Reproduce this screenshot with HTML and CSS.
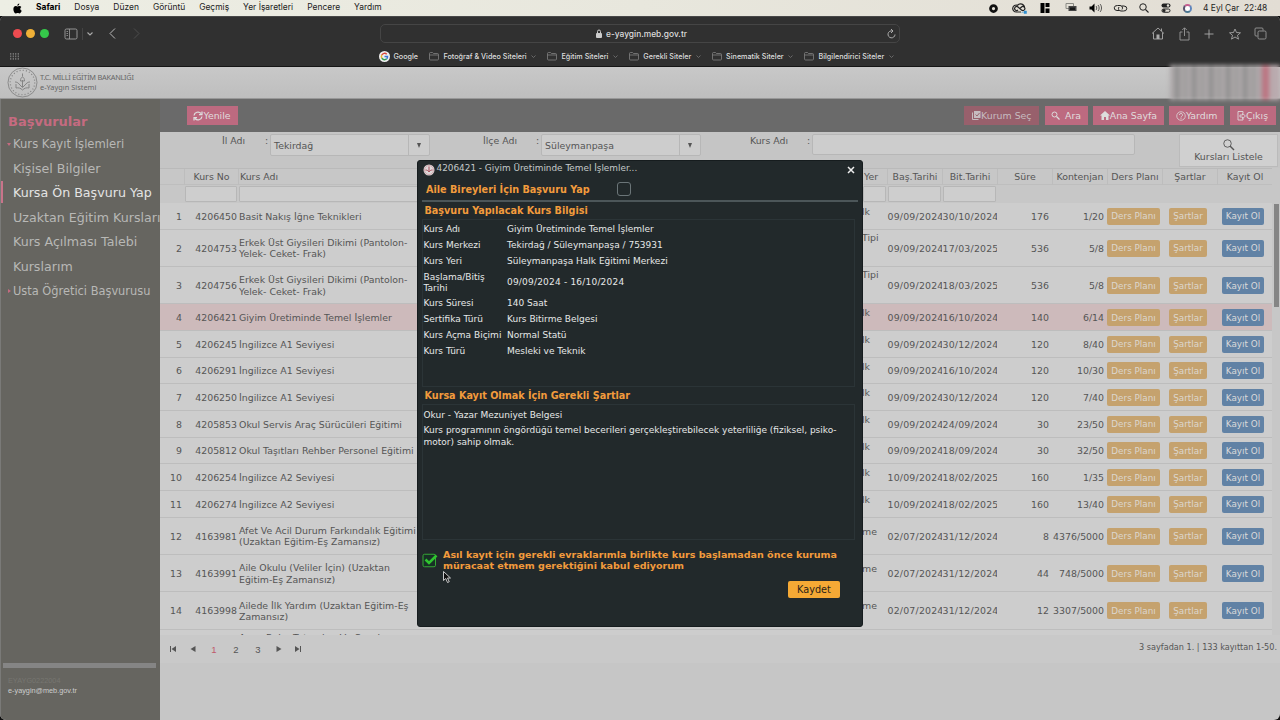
FILE: index.html
```html
<!DOCTYPE html>
<html lang="tr">
<head>
  <meta charset="UTF-8">
  <meta name="viewport" content="width=device-width, initial-scale=1.0">
  <title>e-Yaygın Sistemi</title>
  <link rel="stylesheet" href="styles.css">
</head>
<body>

<div class="menubar">
  <svg class="apple" viewBox="0 0 20 24"><path d="M14 1c0 3-2 5-4.500 5C9.300 3.500 11.500 1.300 14 1zM10 7.500c1 0 2.300-1.200 4.300-1.200 1.800 0 3.300 1 4.200 2.300-3.600 2.200-3 7 .8 8.400-.9 2.700-3 6-5 6-1.500 0-2-.9-3.900-.9s-2.500.9-3.900.9C3.800 23 .8 18 .8 13.500.8 9 3.500 6.500 6.200 6.500c1.700 0 2.800 1 3.800 1z"/></svg>
  <nav class="menus">
    <b>Safari</b><span>Dosya</span><span>Düzen</span><span>Görüntü</span><span>Geçmiş</span><span>Yer İşaretleri</span><span>Pencere</span><span>Yardım</span>
  </nav>
  <div class="status">
    <svg width="9" height="9" viewBox="0 0 18 18"><circle cx="9" cy="9" r="6" fill="none" stroke="#111" stroke-width="5.500"/></svg>
    <svg width="15" height="11" viewBox="0 0 30 22"><path d="M9 18a7 7 0 1 1 2-13.500A8 8 0 0 1 25 10M18 18H9M12 14a4 4 0 1 1 0-6l7 6a4 4 0 1 0 0-6l-3 3" fill="none" stroke="#222" stroke-width="2.400"/><path d="M19 19h4m1-3h5v5h-5z" fill="#2f8fd0" stroke="#2f8fd0"/></svg>
    <svg width="10" height="10" viewBox="0 0 20 20"><path d="M1 0h8v20H1zM11 0h8v8h-8zM11 11h8v9h-8z"/></svg>
    <svg width="12" height="10" viewBox="0 0 24 20"><path d="M2 1h15v10H2z" fill="none" stroke="#8a8a84" stroke-width="2"/><path d="M7 6h16v10H7z" fill="#444"/><path d="M10 9h10v5H10z" fill="#171717"/></svg>
    <svg width="13" height="10" viewBox="0 0 26 20"><path d="M1 7h4l6-6v18l-6-6H1z"/><path d="M14 6c2 2 2 6 0 8M18 4c3 3 3 9 0 12M22 2c4 4 4 12 0 16" fill="none" stroke="#333" stroke-width="1.600"/></svg>
    <svg width="15" height="10" viewBox="0 0 30 20"><path d="M13 15H8a6 5 0 1 1 1-10h5a5 5 0 0 1 4 8M17 6h5a6 5 0 1 1-1 10h-5a5 5 0 0 1-4-8" fill="none" stroke="#222" stroke-width="2"/></svg>
    <svg width="10" height="10" viewBox="0 0 20 20"><circle cx="8" cy="8" r="6.500" fill="none" stroke="#222" stroke-width="2"/><path d="M13 13l6 6" stroke="#222" stroke-width="2.200"/></svg>
    <svg width="10" height="10" viewBox="0 0 20 20"><rect x="1" y="1" width="18" height="8" rx="4" fill="#222"/><circle cx="14" cy="5" r="2.500" fill="#e4e1d8"/><rect x="2" y="12" width="16" height="6.500" rx="3.200" fill="none" stroke="#222" stroke-width="2"/><circle cx="6" cy="15.200" r="3" fill="#222"/></svg>
    <span class="siri"></span>
    <span class="clock">4 Eyl Çar&nbsp; 22:48</span>
  </div>
</div>

<div class="window">
  <div class="safari">
    <div class="safari-top">
      <div class="safari-left">
        <i class="light red"></i><i class="light yellow"></i><i class="light green"></i>
        <svg class="side-icon" width="14" height="12" viewBox="0 0 28 24"><rect x="2" y="2" width="24" height="20" rx="3" fill="none" stroke="#a0a0a0" stroke-width="1.800"/><path d="M11 2v20M5 7h3M5 11h3M5 15h3" stroke="#a0a0a0" stroke-width="1.600"/></svg>
        <i class="divider"></i>
        <svg class="down" width="6" height="4" viewBox="0 0 12 8"><path d="M1 1l5 5 5-5" fill="none" stroke="#aaa" stroke-width="2.200"/></svg>
        <svg class="back" width="7" height="11" viewBox="0 0 14 22"><path d="M12 1L2 11l10 10" fill="none" stroke="#b9b9b9" stroke-width="2"/></svg>
        <svg class="forward" width="7" height="11" viewBox="0 0 14 22"><path d="M2 1l10 10L2 21" fill="none" stroke="#4d4d4d" stroke-width="2"/></svg>
      </div>
      <div class="address">
        <svg width="6" height="9" viewBox="0 0 12 18"><rect y="8" width="12" height="10" rx="2" fill="#ccc"/><path d="M3 9V5a3 3 0 0 1 6 0v4" fill="none" stroke="#ccc" stroke-width="2"/></svg>
        <span>e-yaygin.meb.gov.tr</span>
        <svg class="reload" width="9" height="10" viewBox="0 0 18 20"><path d="M11 4a7 7 0 1 0 5 7M8 0l4 4-4 4" fill="none" stroke="#bbb" stroke-width="1.800"/></svg>
      </div>
      <div class="safari-right">
        <svg width="14" height="13" viewBox="0 0 28 26"><path d="M2 13L14 2l12 11M5 11v13h18V11M21 8V3" fill="none" stroke="#aaa" stroke-width="1.800"/><path d="M11 15h6v9h-6z" fill="#aaa"/></svg>
        <svg width="11" height="14" viewBox="0 0 22 28"><path d="M7 10H2v16h18V10h-5M11 18V2M6.500 6L11 1.500 15.500 6" fill="none" stroke="#999" stroke-width="1.800"/></svg>
        <svg width="10" height="10" viewBox="0 0 20 20"><path d="M10 1v18M1 10h18" stroke="#aaa" stroke-width="1.800"/></svg>
        <svg width="12" height="12" viewBox="0 0 24 24"><path d="M12 2l3 7 8 .6-6 5 2 7.700-7-4.300-7 4.300 2-7.700-6-5L9 9z" fill="none" stroke="#aaa" stroke-width="1.700"/></svg>
        <svg width="13" height="13" viewBox="0 0 26 26"><path d="M7 18H4a2 2 0 0 1-2-2V4a2 2 0 0 1 2-2h12a2 2 0 0 1 2 2v3" fill="none" stroke="#999" stroke-width="1.800"/><rect x="8" y="8" width="16" height="16" rx="2.500" fill="none" stroke="#999" stroke-width="1.800"/></svg>
      </div>
    </div>
    <div class="bookmarks">
      <svg class="apps" width="9" height="7" viewBox="0 0 18 14"><path d="M1.500 0v14M6.500 0v14M11.500 0v14M16.500 0v14" stroke="#888" stroke-width="2" stroke-dasharray="3.500 1.500"/></svg>
      <div class="bookmark-list" id="bookmarks">
        <span class="bookmark google"><svg width="11" height="11" viewBox="0 0 22 22"><circle cx="11" cy="11" r="11" fill="#eee"/><g fill="none" stroke-width="3"><path d="M5.500 8A6.300 6.300 0 0 1 15.500 6.500" stroke="#d9473b"/><path d="M5.600 14.200a6.300 6.300 0 0 1-.1-6.200" stroke="#e5b32c"/><path d="M15.500 15.500a6.300 6.300 0 0 1-9.900-1.300" stroke="#35a053"/><path d="M11 11h6a6.300 6.300 0 0 1-1.500 4.500" stroke="#3b76d8"/></g></svg>Google</span>
      </div>
    </div>
  </div>

  <header class="site-header">
    <svg class="seal" width="31" height="31" viewBox="0 0 62 62" fill="none" stroke="#858585"><circle cx="31" cy="31" r="29" stroke-width="1.800"/><circle cx="31" cy="31" r="24.500" stroke-width="2.500" stroke-dasharray="2 4.400"/><path d="M31 13v6M27 28c0-4 1-7 4-8 3 1 4 4 4 8zM31 26v14M16 30c3 0 6 1 8 4l7 7 7-7c2-3 5-4 8-4M18 34v8c5-1 9 0 13 4 4-4 8-5 13-4v-8" stroke-width="2"/></svg>
    <div class="brand"><span>T.C. MİLLİ EĞİTİM BAKANLIĞI</span><br>e-Yaygın Sistemi</div>
    <div class="user-info"></div>
  </header>

  <div class="page">
    <aside class="sidebar">
      <h2>Başvurular</h2>
      <ul>
        <li class="group open">Kurs Kayıt İşlemleri</li>
        <li>Kişisel Bilgiler</li>
        <li class="active">Kursa Ön Başvuru Yap</li>
        <li>Uzaktan Eğitim Kursları</li>
        <li>Kurs Açılması Talebi</li>
        <li>Kurslarım</li>
        <li class="group">Usta Öğretici Başvurusu</li>
      </ul>
      <div class="side-footer">
        <div class="faint">EYAYG0222004</div>
        <div>e-yaygin@meb.gov.tr</div>
      </div>
    </aside>

    <main class="content">
      <div class="actions">
        <button class="btn-pink refresh"><svg width="10" height="10" viewBox="0 0 20 20"><path d="M2 9a8 8 0 0 1 14-4M18 1v6h-6M18 11a8 8 0 0 1-14 4M2 19v-6h6" fill="none" stroke="#ddd" stroke-width="2.500"/></svg>Yenile</button>
        <button class="btn-pink kurum"><svg width="9" height="9" viewBox="0 0 18 18"><path d="M4 0h13v14H4z" fill="#c6bcc0"/><path d="M1 3v14h12" fill="none" stroke="#c6bcc0" stroke-width="2"/><path d="M7 7l3 3 5-6" fill="none" stroke="#99656f" stroke-width="2"/></svg>Kurum Seç</button>
        <button class="btn-pink ara"><svg width="9" height="9" viewBox="0 0 18 18"><circle cx="7" cy="7" r="5" fill="none" stroke="#ddd" stroke-width="2"/><path d="M11 11l6 6" stroke="#ddd" stroke-width="2.500"/></svg>Ara</button>
        <button class="btn-pink home"><svg width="10" height="9" viewBox="0 0 20 18"><path d="M10 0l10 9h-3v9h-5v-6H8v6H3V9H0z" fill="#ddd"/></svg>Ana Sayfa</button>
        <button class="btn-pink help"><svg width="10" height="10" viewBox="0 0 20 20"><circle cx="10" cy="10" r="8.500" fill="none" stroke="#ddd" stroke-width="1.500"/><path d="M7 8a3 3 0 1 1 4.500 2.500Q10 11.500 10 13M10 14.500V16" fill="none" stroke="#ddd" stroke-width="1.800"/></svg>Yardım</button>
        <button class="btn-pink exit"><svg width="9" height="10" viewBox="0 0 18 20"><path d="M12 5V1H2v17h10v-4M6 8v4h5v3l6-5-6-5v3z" fill="none" stroke="#ddd" stroke-width="1.700"/></svg>Çıkış</button>
      </div>

      <div class="filters">
        <label class="l1">İl Adı</label><span class="colon">:</span>
        <div class="select">Tekirdağ<i></i></div>
        <label class="l2">İlçe Adı</label><span class="colon">:</span>
        <div class="select">Süleymanpaşa<i></i></div>
        <label class="l3">Kurs Adı</label><span class="colon">:</span>
        <div class="search-box"></div>
        <button class="list-btn"><svg width="12" height="12" viewBox="0 0 24 24"><circle cx="9" cy="9" r="7.500" fill="none" stroke="#555" stroke-width="1.800"/><path d="M14 14l8 8" stroke="#555" stroke-width="3"/></svg>Kursları Listele</button>
      </div>

      <div class="grid">
        <div class="row head">
          <span></span><span>Kurs No</span><span class="left">Kurs Adı</span><span></span><span class="left">Yer</span><span>Baş.Tarihi</span><span>Bit.Tarihi</span><span>Süre</span><span>Kontenjan</span><span>Ders Planı</span><span>Şartlar</span><span>Kayıt Ol</span>
        </div>
        <div class="row filter-row">
          <span></span><span><i></i></span><span><i></i></span><span></span><span><i></i></span><span><i></i></span><span><i></i></span>
        </div>
        <div class="grid-body">
          <div class="rows" id="rows"></div>
          <i class="scroll"></i>
        </div>
      </div>

      <div class="pager">
        <svg width="6" height="6" viewBox="0 0 12 12"><path d="M0 0h2v12H0zM12 0v12L3 6z"/></svg>
        <svg width="6" height="6" viewBox="0 0 12 12"><path d="M11 0v12L1 6z"/></svg>
        <span class="current">1</span><span>2</span><span>3</span>
        <svg width="6" height="6" viewBox="0 0 12 12"><path d="M1 0v12l10-6z"/></svg>
        <svg width="6" height="6" viewBox="0 0 12 12"><path d="M0 0v12l9-6zM10 0h2v12h-2z"/></svg>
        <div class="info">3 sayfadan 1. | 133 kayıttan 1-50.</div>
      </div>
    </main>
  </div>
</div>

<div class="modal">
  <div class="modal-title">
    <svg width="12" height="12" viewBox="0 0 24 24"><circle cx="12" cy="12" r="11" fill="#ded8d9"/><circle cx="12" cy="12" r="9" fill="none" stroke="#c98d96" stroke-width="1.200"/><path d="M12 5v9M5 12c3 0 5 1 7 4 2-3 4-4 7-4" fill="none" stroke="#a64b58" stroke-width="2"/></svg>
    <span>4206421 - Giyim Üretiminde Temel İşlemler...</span>
    <svg class="close" width="8" height="8" viewBox="0 0 16 16"><path d="M2 2l12 12M14 2L2 14" stroke="#eee" stroke-width="3"/></svg>
  </div>
  <div class="family"><span>Aile Bireyleri İçin Başvuru Yap</span><i></i></div>
  <h3>Başvuru Yapılacak Kurs Bilgisi</h3>
  <dl class="panel course">
    <dt>Kurs Adı</dt><dd>Giyim Üretiminde Temel İşlemler</dd>
    <dt>Kurs Merkezi</dt><dd>Tekirdağ / Süleymanpaşa / 753931</dd>
    <dt>Kurs Yeri</dt><dd>Süleymanpaşa Halk Eğitimi Merkezi</dd>
    <dt>Başlama/Bitiş<br>Tarihi</dt><dd class="range">09/09/2024 - 16/10/2024</dd>
    <dt>Kurs Süresi</dt><dd>140 Saat</dd>
    <dt>Sertifika Türü</dt><dd>Kurs Bitirme Belgesi</dd>
    <dt>Kurs Açma Biçimi</dt><dd>Normal Statü</dd>
    <dt>Kurs Türü</dt><dd>Mesleki ve Teknik</dd>
  </dl>
  <h3>Kursa Kayıt Olmak İçin Gerekli Şartlar</h3>
  <div class="panel terms">
    <p>Okur - Yazar Mezuniyet Belgesi</p>
    <p>Kurs programının öngördüğü temel becerileri gerçekleştirebilecek yeterliliğe (fiziksel, psiko-<br>motor) sahip olmak.</p>
  </div>
  <div class="accept">
    <svg width="16" height="15" viewBox="0 0 32 30"><rect x="2" y="2.500" width="25" height="25" rx="3" fill="#173025" stroke="#36a836" stroke-width="2"/><path d="M7 13l7 7L29 5" fill="none" stroke="#2fc52f" stroke-width="5"/></svg>
    <span>Asıl kayıt için gerekli evraklarımla birlikte kurs başlamadan önce kuruma<br>müracaat etmem gerektiğini kabul ediyorum</span>
  </div>
  <button class="save">Kaydet</button>
</div>
<svg class="cursor" width="8" height="12" viewBox="0 0 16 24"><path d="M1 1v18l4.500-4 3.500 8 3.500-1.500-3.500-7.500h6z" fill="#111" stroke="#ddd" stroke-width="1.800"/></svg>

<script>
  const siteler = ['Fotoğraf & Video Siteleri', 'Eğitim Siteleri', 'Gerekli Siteler', 'Sinematik Siteler', 'Bilgilendirici Siteler'];
  document.getElementById('bookmarks').innerHTML += siteler.map(ad => `
    <span class="bookmark">
      <svg width="10" height="9" viewBox="0 0 20 18"><path d="M1 3a2 2 0 0 1 2-2h4l2 2h8a2 2 0 0 1 2 2v9a2 2 0 0 1-2 2H3a2 2 0 0 1-2-2zM1 6h18" fill="none" stroke="#858585" stroke-width="1.500"/></svg>
      <span>${ad.replace('&', '&amp;')}</span>
      <svg class="chev" width="5" height="3" viewBox="0 0 10 6"><path d="M1 1l4 4 4-4" fill="none" stroke="#777" stroke-width="1.600"/></svg>
    </span>`).join('');

  // no, ad, yer, başlangıç, bitiş, süre, kontenjan
  const kurslar = [
    ['4206450', 'Basit Nakış İğne Teknikleri', 'lk', '09/09/2024', '30/10/2024', 176, '1/20'],
    ['4204753', 'Erkek Üst Giysileri Dikimi (Pantolon-<br>Yelek- Ceket- Frak)', 'Tipi', '09/09/2024', '17/03/2025', 536, '5/8'],
    ['4204756', 'Erkek Üst Giysileri Dikimi (Pantolon-<br>Yelek- Ceket- Frak)', 'Tipi', '09/09/2024', '18/03/2025', 536, '5/8'],
    ['4206421', 'Giyim Üretiminde Temel İşlemler', 'lk', '09/09/2024', '16/10/2024', 140, '6/14'],
    ['4206245', 'İngilizce A1 Seviyesi', 'lk', '09/09/2024', '30/12/2024', 120, '8/40'],
    ['4206291', 'İngilizce A1 Seviyesi', 'lk', '09/09/2024', '16/10/2024', 120, '10/30'],
    ['4206250', 'İngilizce A1 Seviyesi', 'lk', '09/09/2024', '30/12/2024', 120, '7/40'],
    ['4205853', 'Okul Servis Araç Sürücüleri Eğitimi', 'lk', '09/09/2024', '24/09/2024', 30, '23/50'],
    ['4205812', 'Okul Taşıtları Rehber Personel Eğitimi', 'lk', '09/09/2024', '18/09/2024', 30, '32/50'],
    ['4206254', 'İngilizce A2 Seviyesi', 'lk', '10/09/2024', '18/02/2025', 160, '1/35'],
    ['4206274', 'İngilizce A2 Seviyesi', 'lk', '10/09/2024', '18/02/2025', 160, '13/40'],
    ['4163981', 'Afet Ve Acil Durum Farkındalık Eğitimi<br>(Uzaktan Eğitim-Eş Zamansız)', 'me', '02/07/2024', '31/12/2024', 8, '4376/5000'],
    ['4163991', 'Aile Okulu (Veliler İçin) (Uzaktan<br>Eğitim-Eş Zamansız)', 'me', '02/07/2024', '31/12/2024', 44, '748/5000'],
    ['4163998', 'Ailede İlk Yardım (Uzaktan Eğitim-Eş<br>Zamansız)', 'me', '02/07/2024', '31/12/2024', 12, '3307/5000']
  ];

  document.getElementById('rows').innerHTML = kurslar.map((k, i) => `
    <div class="row data${k[1].includes('<br>') ? ' tall' : ''}${i === 3 ? ' selected' : ''}">
      <span class="right idx">${i + 1}</span><span class="right num">${k[0]}</span><span class="left">${k[1]}</span><span></span>
      <span class="yer ${k[2] === 'Tipi' ? 'tipi' : ''}">${k[2]}</span>
      <span class="date">${k[3]}</span><span class="date">${k[4]}</span>
      <span class="right sure">${k[5]}</span><span class="right kont">${k[6]}</span>
      <span><button class="mini plan">Ders Planı</button></span>
      <span><button class="mini sart">Şartlar</button></span>
      <span><button class="mini kayit">Kayıt Ol</button></span>
    </div>`).join('') + `
    <div class="row data last"><span></span><span></span><span class="left">Anne Baba Tutumları Ve Çocuk</span><span></span></div>`;
</script>

</body>
</html>
```
FILE: styles.css
```css
* {
    box-sizing: border-box;
}
body {
    margin: 0;
    width: 1280px;
    height: 720px;
    overflow: hidden;
    background: #111;
    font-family: "DejaVu Sans", sans-serif;
    font-size: 9.4px;
    color: #555;
}
svg {
    display: block;
    flex-shrink: 0;
}
button {
    border: none;
    padding: 0;
    font-family: inherit;
}

/* macOS menü çubuğu */
.menubar {
    height: 16px;
    display: flex;
    align-items: center;
    background: linear-gradient(90deg, #edeee4, #e8e7dd 50%, #e2ddd4);
    font-family: Inter, sans-serif;
    font-size: 8.45px;
    color: #1c1c1c;
}
.apple {
    width: 9px;
    height: 11px;
    margin-left: 13px;
}
.menus {
    display: flex;
    gap: 14px;
    margin-left: 14px;
    line-height: 15px;
    padding-bottom: 1px;
}
.menus b {
    color: #000;
}
.status {
    margin-left: auto;
    width: 300px;
    display: grid;
    grid-template-columns: 26px 26px 26px 25px 25px 25px 22px 22px 20px auto;
    align-items: center;
    justify-items: center;
}
.siri {
    width: 9px;
    height: 9px;
    border-radius: 50%;
    border: 2px solid #6e6a80;
    border-color: #c55d90 #5d86bd #4a7690 #55516c;
    background: #fff;
}
.clock {
    justify-self: start;
    margin-left: 6px;
    white-space: nowrap;
}

/* Safari */
.window {
    height: 704px;
    display: flex;
    flex-direction: column;
    border-radius: 5px 5px 6px 6px;
    overflow: hidden;
    background: #c6c6c6;
}
.safari {
    height: 51px;
    background: #303030;
    border-top: 1px solid #484848;
    border-bottom: 1px solid #151515;
    font-family: Inter, sans-serif;
    color: #ddd;
}
.safari-top {
    height: 33px;
    display: flex;
    align-items: center;
}
.safari-left {
    width: 380px;
    display: flex;
    align-items: center;
    padding-left: 13px;
}
.light {
    width: 9px;
    height: 9px;
    border-radius: 50%;
    margin-right: 4.4px;
}
.red {
    background: #ed4b50;
}
.yellow {
    background: #efb037;
}
.green {
    background: #35c84a;
}
.side-icon {
    margin-left: 11px;
}
.divider {
    width: 1px;
    height: 12px;
    margin-left: 4px;
    background: #444;
}
.down {
    margin-left: 4px;
}
.back {
    margin-left: 16px;
}
.forward {
    margin-left: 17px;
}
.address {
    width: 520px;
    height: 19px;
    border: 1px solid #454545;
    border-radius: 5px;
    display: flex;
    align-items: center;
    font-size: 8.4px;
    font-weight: 500;
    padding: 0 3px 0 215px;
    gap: 4px;
}
.reload {
    margin-left: auto;
}
.safari-right {
    margin-left: 244.5px;
    display: grid;
    grid-template-columns: 27px 25px 25px 26px 26px;
    justify-items: center;
    align-items: center;
}
.bookmarks {
    height: 13px;
    display: flex;
    align-items: center;
    font-size: 7.2px;
    font-weight: 500;
    white-space: nowrap;
}
.apps {
    margin-left: 10px;
}
.bookmark-list {
    display: flex;
    margin-left: 360px;
    gap: 10.9px;
}
.bookmark {
    display: flex;
    align-items: center;
    gap: 4.5px;
}
.google {
    gap: 3.5px;
}

.site-header {
    height: 32px;
    display: flex;
    align-items: center;
    padding-left: 7px;
    background: linear-gradient(#c8c8c8, #bebebe);
    border-bottom: 1px solid #989898;
}
.brand {
    margin-left: 2px;
    font-family: "Noto Sans", sans-serif;
    font-size: 7.4px;
    line-height: 9.3px;
    color: #666;
}
.brand span {
    letter-spacing: -0.28px;
}
.user-info {
    margin-left: auto;
    width: 110px;
    height: 35px;
    background: linear-gradient(90deg, transparent 85px, #ada7a9 87px 91px, #bc7481 93px 98px, #b9aaae 100px), repeating-linear-gradient(90deg, #ada8a9 0 4px, #8d8d8d 6px 8px, #aaa5a6 10px 14px, #999 15px 17px);
    filter: blur(2px);
}

.page {
    flex: 1;
    display: flex;
    min-height: 0;
}
.sidebar {
    width: 160px;
    background: #666560;
    color: #b8b8b6;
    display: flex;
    flex-direction: column;
    overflow: hidden;
    border-left: 1px solid #7a7a78;
}
.sidebar h2 {
    margin: 15px 0 0 7px;
    font-size: 13px;
    line-height: 16px;
    color: #c56b80;
}
.sidebar ul {
    list-style: none;
    margin: 2px 0 0;
    padding: 0;
    white-space: nowrap;
}
.sidebar li {
    height: 24.5px;
    line-height: 24.5px;
    padding-left: 12px;
    font-size: 12.65px;
    position: relative;
}
.sidebar li.active {
    color: #e4e4e4;
}
.sidebar li.active::before {
    content: "";
    position: absolute;
    left: -1px;
    top: 0;
    width: 3px;
    height: 22px;
    background: #c9748a;
}
.sidebar li.group {
    font-size: 11.4px;
}
.sidebar li.group.open {
    font-size: 11.6px;
}
.sidebar li.group::before {
    content: "";
    position: absolute;
    left: 7px;
    top: 10px;
    border: 2.5px solid transparent;
    border-left: 3px solid #c56b80;
    border-right: none;
}
.sidebar li.open::before {
    left: 6px;
    top: 11px;
    border: 2.5px solid transparent;
    border-top: 3px solid #c56b80;
    border-bottom: none;
}
.side-footer {
    margin: auto 4px 23px 2px;
    border-top: 5px solid #858585;
    padding: 8px 0 0 5px;
    height: 34px;
    font-family: "Liberation Sans", sans-serif;
    font-size: 7.3px;
    line-height: 10px;
    color: #ccc;
}
.faint {
    color: #777671;
}

.content {
    flex: 1;
    min-width: 0;
    display: flex;
    flex-direction: column;
}
.actions {
    height: 33px;
    padding: 0 4.5px 0 26.5px;
    display: flex;
    align-items: center;
    gap: 5.3px;
    background: #6a6a6a;
}
.btn-pink {
    height: 19px;
    display: flex;
    align-items: center;
    justify-content: center;
    background: #bd6a80;
    color: #e0dcdd;
    font-size: 9.4px;
    white-space: nowrap;
}
.refresh {
    width: 51px;
    margin-right: auto;
}
.kurum {
    width: 75px;
    background: #98606c;
    color: #c6bcc0;
}
.ara {
    width: 43px;
    gap: 5px;
}
.home {
    width: 71px;
}
.help {
    width: 55px;
}
.exit {
    width: 46px;
}

.filters {
    height: 36px;
    padding-top: 2px;
    display: flex;
    background: #c5c5c5;
    white-space: nowrap;
}
.filters label,
.colon {
    line-height: 13px;
}
.l1 {
    margin-left: 62px;
    width: 43px;
}
.l2 {
    margin-left: 53px;
    width: 53px;
}
.l3 {
    margin-left: 49px;
    width: 57px;
}
.colon {
    width: 5px;
}
.select {
    width: 160px;
    height: 22px;
    padding-left: 3px;
    background: #cdcdcd;
    border: 1px solid #b7b7b7;
    border-radius: 2px;
    line-height: 21px;
    display: flex;
    justify-content: space-between;
}
.select i {
    width: 21px;
    border-left: 1px solid #b7b7b7;
    display: flex;
    align-items: center;
    justify-content: center;
}
.select i::after {
    content: "";
    border: 2.5px solid transparent;
    border-top: 5px solid #555;
    border-bottom: none;
}
.search-box {
    width: 323px;
    height: 21px;
    background: #cdcdcd;
    border: 1px solid #b7b7b7;
    border-radius: 2px;
}
.list-btn {
    width: 99px;
    height: 33px;
    margin-left: 44px;
    display: flex;
    flex-direction: column;
    align-items: center;
    justify-content: center;
    background: #d0d0d0;
    border: 1px solid #bbb;
    color: #555;
    font-size: 9.4px;
}

/* Kurs tablosu */
.grid {
    height: 467px;
    background: #c7c7c7;
}
.row {
    display: grid;
    grid-template-columns: 24px 54px 474px 150px 25px 55px 55px 55px 55px 55px 55px 55px;
    width: 1112px;
    white-space: nowrap;
}
.head {
    height: 16px;
    border-top: 1px solid #bababa;
    line-height: 16px;
    text-align: center;
}
.head span + span {
    border-left: 1px solid #bdbdbd;
}
.head .left,
.data .left {
    text-align: left;
    padding-left: 1px;
}
.filter-row {
    height: 19px;
    border-top: 1px solid #bebebe;
}
.filter-row i {
    display: block;
    height: 16px;
    margin: 1px 1px 0;
    background: #cecece;
    border: 1px solid #b7b7b7;
    border-radius: 1px;
}
.grid-body {
    height: 432px;
    overflow: hidden;
    display: flex;
    justify-content: space-between;
}
.data {
    height: 26.67px;
    padding-top: 1px;
    align-items: center;
    line-height: 11.3px;
    background: #cdcdcd;
    border-bottom: 1px solid #bdbdbd;
}
.tall {
    height: 37.33px;
}
.last {
    align-items: start;
    padding-top: 2px;
}
.selected {
    background: #cdbabb;
}
.right {
    text-align: right;
}
.idx {
    padding-right: 2px;
}
.num {
    padding-right: 1px;
}
.yer {
    align-self: start;
    padding-top: 2px;
}
.tall .yer {
    padding-top: 7px;
}
.tall .yer.tipi {
    padding-top: 1px;
}
.date {
    overflow: hidden;
    padding-left: 0.5px;
    letter-spacing: 0.2px;
}
.sure {
    padding-right: 3px;
}
.kont {
    padding-right: 3px;
}
.mini {
    height: 17px;
    display: block;
    border-radius: 2px;
    font-size: 8.8px;
    color: #dcd6cd;
    background: #c5a26e;
}
.plan {
    width: 53px;
}
.sart {
    width: 38px;
    margin-left: 7px;
}
.kayit {
    width: 42px;
    margin-left: 5px;
    background: #6182a5;
    color: #dadada;
}
.scroll {
    width: 5px;
    height: 103px;
    margin: 1px 1px 0 0;
    background: #858585;
}

.pager {
    height: 28px;
    display: grid;
    grid-template-columns: 20px 20px 22px 22px 22px 19px 19px 1fr;
    justify-items: center;
    align-items: center;
    padding: 0 3px 0 3px;
    background: #c9c9c9;
    fill: #555;
    font-family: "Liberation Sans", sans-serif;
    font-size: 9.5px;
}
.pager .current {
    color: #c05a6b;
}
.info {
    justify-self: end;
    align-self: start;
    padding-top: 7px;
    font-family: "DejaVu Sans", sans-serif;
    font-size: 8.15px;
}

/* Başvuru penceresi */
.modal {
    position: absolute;
    left: 417px;
    top: 160px;
    width: 446px;
    height: 467px;
    padding: 0 4px;
    background: #22292b;
    border: 1px solid #161c1e;
    border-radius: 3px;
    color: #e6e8e8;
    font-size: 9px;
    white-space: nowrap;
}
.modal-title {
    height: 17px;
    display: flex;
    align-items: center;
    gap: 1.5px;
    padding: 0 3px 0 1px;
    font-size: 8.9px;
    color: #c5c9ca;
}
.modal-title span {
    padding-bottom: 3px;
}
.close {
    margin-left: auto;
}
.family {
    height: 24px;
    display: flex;
    align-items: center;
    padding-left: 4px;
    border-bottom: 2px solid #4c5659;
    font-size: 9.67px;
    font-weight: bold;
    color: #f29b3c;
}
.family i {
    width: 14px;
    height: 14px;
    margin-left: 27px;
    border: 1px solid #6b7578;
    border-radius: 3px;
}
.modal h3 {
    margin: 0 0 0 2.5px;
    height: 17px;
    line-height: 18px;
    font-size: 9.63px;
    color: #f29b3c;
}
.panel {
    margin: 0 3px 0 0;
    border: 1px solid #2b3437;
}
.course {
    height: 168px;
    padding: 2px 0 0 0.5px;
    display: grid;
    grid-template-columns: 83.500px auto;
    grid-template-rows: 16px 16px 16px 26px 16px 16px 16px 16px;
    align-items: center;
    line-height: 11.4px;
}
.course dd {
    margin: 0;
}
.course .range {
    letter-spacing: 0.2px;
}
.terms {
    height: 136px;
    padding: 4.5px 0.5px;
}
.terms p {
    margin: 0 0 4px;
    line-height: 11.5px;
}
.accept {
    display: flex;
    align-items: center;
    gap: 5px;
    margin-top: 9px;
    font-size: 9.55px;
    line-height: 11.4px;
    font-weight: bold;
    color: #f29b3c;
}
.save {
    display: block;
    width: 52px;
    height: 17px;
    margin: 9px 18px 0 auto;
    border-radius: 2px;
    background: #f5a935;
    color: #2a2318;
    font-size: 9.7px;
}
.cursor {
    position: absolute;
    left: 443px;
    top: 571px;
}
```
